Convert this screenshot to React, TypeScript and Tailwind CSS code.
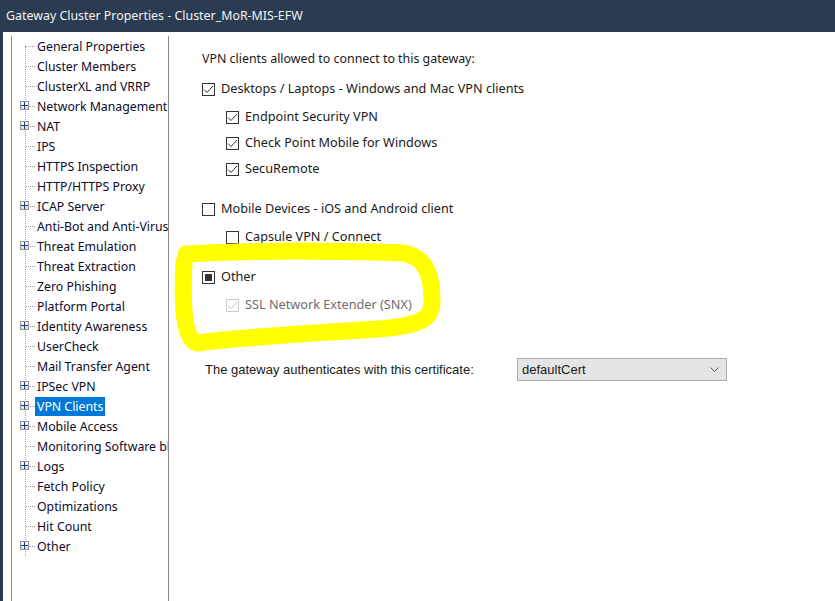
import React from 'react'

type TreeItem = { label: string; expandable?: boolean; selected?: boolean }

const treeItems: TreeItem[] = [
  { label: 'General Properties' },
  { label: 'Cluster Members' },
  { label: 'ClusterXL and VRRP' },
  { label: 'Network Management', expandable: true },
  { label: 'NAT', expandable: true },
  { label: 'IPS' },
  { label: 'HTTPS Inspection' },
  { label: 'HTTP/HTTPS Proxy' },
  { label: 'ICAP Server', expandable: true },
  { label: 'Anti-Bot and Anti-Virus' },
  { label: 'Threat Emulation', expandable: true },
  { label: 'Threat Extraction' },
  { label: 'Zero Phishing' },
  { label: 'Platform Portal' },
  { label: 'Identity Awareness', expandable: true },
  { label: 'UserCheck' },
  { label: 'Mail Transfer Agent' },
  { label: 'IPSec VPN', expandable: true },
  { label: 'VPN Clients', expandable: true, selected: true },
  { label: 'Mobile Access', expandable: true },
  { label: 'Monitoring Software blade' },
  { label: 'Logs', expandable: true },
  { label: 'Fetch Policy' },
  { label: 'Optimizations' },
  { label: 'Hit Count' },
  { label: 'Other', expandable: true },
]

const Expander = () => (
  <span className="absolute left-[8px] top-[5px] z-10 flex h-[9px] w-[9px] items-center justify-center border border-[#919191] bg-gradient-to-b from-white to-[#dcdcdc]">
    <svg width="7" height="7" viewBox="0 0 7 7">
      <path d="M0 3.5H7M3.5 0V7" stroke="#1f3a8a" strokeWidth="1" />
    </svg>
  </span>
)

const TreeRow = ({ item }: { item: TreeItem }) => (
  <div className="flex h-[20px] items-center whitespace-nowrap">
    <span className="relative h-[20px] w-[23px] shrink-0">
      <span className="absolute left-[14px] top-[10px] w-[9px] border-t border-dotted border-[#a0a0a0]" />
      {item.expandable && <Expander />}
    </span>
    <span
      className={
        item.selected
          ? 'bg-[#0078d7] px-[2px] leading-[19px] text-white'
          : 'px-[2px] leading-[19px] text-[#0b0b2a]'
      }
    >
      {item.label}
    </span>
  </div>
)

type CheckState = 'checked' | 'unchecked' | 'mixed' | 'disabled'

const Checkbox = ({ state }: { state: CheckState }) => {
  const disabled = state === 'disabled'
  return (
    <span
      className={
        disabled
          ? 'flex h-[13px] w-[13px] shrink-0 items-center justify-center border border-[#cccccc] bg-white'
          : 'flex h-[13px] w-[13px] shrink-0 items-center justify-center border border-[#333333] bg-white'
      }
    >
      {(state === 'checked' || disabled) && (
        <svg width="11" height="11" viewBox="0 0 11 11">
          <path d="M1 5.5L4 8.5L10 2" fill="none" stroke={disabled ? '#c4c4c4' : '#333333'} strokeWidth="1" />
        </svg>
      )}
      {state === 'mixed' && <span className="h-[7px] w-[7px] bg-[#333333]" />}
    </span>
  )
}

const CheckRow = ({
  label,
  state,
  indent,
  className,
}: {
  label: string
  state: CheckState
  indent?: boolean
  className?: string
}) => (
  <div className={`flex h-[26px] items-center gap-[6px] ${indent ? 'pl-[24px]' : ''} ${className ?? ''}`}>
    <Checkbox state={state} />
    <span className={state === 'disabled' ? 'text-[#6d6d6d]' : 'text-[#1a1a1a]'}>{label}</span>
  </div>
)

export default function App() {
  return (
    <div
      className="relative flex h-[601px] w-[835px] flex-col overflow-hidden bg-white text-[12.3px]"
      style={{ fontFamily: '"Noto Sans", "Open Sans", sans-serif' }}
    >
      <div className="flex h-[32px] shrink-0 items-center bg-[#2b3c52] pl-[6px] text-[12.4px] text-[#f2f2f2]">
        Gateway Cluster Properties - Cluster_MoR-MIS-EFW
      </div>

      <div className="flex min-h-0 flex-1">
        <div className="w-[3px] shrink-0 bg-[#2b3c52]" />

        <div className="w-[8px] shrink-0" />

        <div className="relative mt-[4px] w-[158px] shrink-0 overflow-hidden border-x border-[#8a8a8a]">
          <span className="absolute bottom-[45px] left-[13px] top-[10px] border-l border-dotted border-[#a0a0a0]" />
          {treeItems.map((item) => (
            <TreeRow key={item.label} item={item} />
          ))}
        </div>

        <div className="flex flex-1 flex-col pl-[33px] pt-[17px] text-[12.7px]">
          <div className="flex h-[20px] items-center text-[12.4px] text-[#1a1a1a]">
            VPN clients allowed to connect to this gateway:
          </div>
          <CheckRow className="mt-[7px]" label="Desktops / Laptops - Windows and Mac VPN clients" state="checked" />
          <CheckRow className="mt-[2px]" indent label="Endpoint Security VPN" state="checked" />
          <CheckRow indent label="Check Point Mobile for Windows" state="checked" />
          <CheckRow indent label="SecuRemote" state="checked" />
          <CheckRow className="mt-[14px]" label="Mobile Devices - iOS and Android client" state="unchecked" />
          <CheckRow className="mt-[2px]" indent label="Capsule VPN / Connect" state="unchecked" />
          <CheckRow className="mt-[14px]" label="Other" state="mixed" />
          <CheckRow className="mt-[2px]" indent label="SSL Network Extender (SNX)" state="disabled" />

          <div
            className="mt-[40px] flex items-center pl-[3px] text-[13px] text-[#1a1a1a]"
            style={{ fontFamily: '"Liberation Sans", Arial, sans-serif' }}
          >
            <span className="w-[312px]">The gateway authenticates with this certificate:</span>
            <div className="flex h-[23px] w-[210px] items-center justify-between border border-[#adadad] bg-[#e5e5e5] pl-[4px] pr-[7px]">
              <span>defaultCert</span>
              <svg width="9" height="5" viewBox="0 0 9 5">
                <path d="M0.5 0.5L4.5 4.5L8.5 0.5" fill="none" stroke="#555555" strokeWidth="1" />
              </svg>
            </div>
          </div>
        </div>
      </div>

      <svg className="pointer-events-none absolute left-0 top-0" width="835" height="601" viewBox="0 0 835 601">
        <path
          d="M186 254 C 250 250, 340 251, 404 253 C 428 258, 432 278, 432 302 C 432 320, 418 326, 378 329 C 300 334, 240 337, 197 343 C 183 340, 182 300, 184 262"
          fill="none"
          stroke="#ffff00"
          strokeWidth="17"
          strokeLinecap="round"
          strokeLinejoin="round"
        />
      </svg>
    </div>
  )
}
